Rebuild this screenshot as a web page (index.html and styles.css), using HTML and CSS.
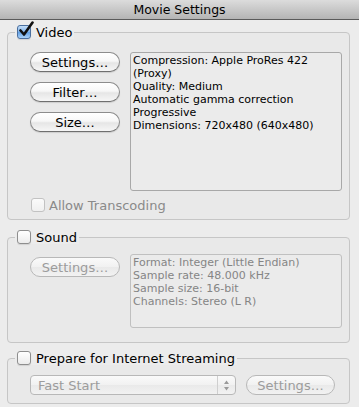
FILE: index.html
```html
<!DOCTYPE html>
<html lang="en">
    <head>
        <meta charset="UTF-8">
        <meta name="viewport" content="width=device-width, initial-scale=1.0">
        <title>Movie Settings</title>
        <link rel="stylesheet" href="styles.css">
    </head>
    <body>
        <header class="titlebar">Movie Settings</header>

        <main class="sheet">
            <fieldset class="group video">
                <legend>
                    <span class="check checked">
                        <svg viewBox="0 0 18 18" width="18" height="18">
                            <path d="M3.5 9.5 L7 13.5 L15.5 1.5" fill="none" stroke="#111" stroke-width="2.6" stroke-linecap="round" stroke-linejoin="round"/>
                        </svg>
                    </span>
                    Video
                </legend>
                <div class="group-body">
                    <div class="row">
                        <div class="buttons">
                            <button class="btn">Settings…</button>
                            <button class="btn">Filter…</button>
                            <button class="btn">Size…</button>
                        </div>
                        <div class="info video-info">
                            Compression: Apple ProRes 422 (Proxy)<br>
                            Quality: Medium<br>
                            Automatic gamma correction<br>
                            Progressive<br>
                            Dimensions: 720x480 (640x480)
                        </div>
                    </div>
                    <label class="option disabled"><span class="check"></span>Allow Transcoding</label>
                </div>
            </fieldset>

            <fieldset class="group sound">
                <legend><span class="check"></span>Sound</legend>
                <div class="group-body">
                    <div class="row">
                        <div class="buttons">
                            <button class="btn disabled">Settings…</button>
                        </div>
                        <div class="info sound-info disabled">
                            Format: Integer (Little Endian)<br>
                            Sample rate: 48.000 kHz<br>
                            Sample size: 16-bit<br>
                            Channels: Stereo (L R)
                        </div>
                    </div>
                </div>
            </fieldset>

            <fieldset class="group streaming">
                <legend><span class="check"></span>Prepare for Internet Streaming</legend>
                <div class="group-body">
                    <div class="stream-row">
                        <div class="popup disabled">
                            <span>Fast Start</span>
                            <span class="arrows">
                                <svg viewBox="0 0 7 11" width="7" height="11">
                                    <path d="M3.5 0.5 L6 4 L1 4 Z M3.5 10.5 L6 7 L1 7 Z" fill="#9a9a9a"/>
                                </svg>
                            </span>
                        </div>
                        <button class="btn disabled">Settings…</button>
                    </div>
                </div>
            </fieldset>
        </main>
    </body>
</html>
```

FILE: styles.css
```css
body {
    margin: 0;
    background-color: #ececec;
    font-family: "DejaVu Sans", "Noto Sans", sans-serif;
    color: #000;
    overflow: hidden;
}

.titlebar {
    height: 19px;
    line-height: 19px;
    text-align: center;
    font-size: 12.5px;
    background: linear-gradient(#dcdcdc, #b4b4b4);
    border-bottom: 1px solid #5a5a5a;
}

.sheet {
    padding: 5px 9px 0 7px;
}

.group {
    margin: 0;
    padding: 0;
    min-width: 0;
    border: 1px solid #c6c6c6;
    border-radius: 4px;
    background-color: #e9e9e9;
}

.group legend {
    display: flex;
    align-items: center;
    height: 14px;
    margin-left: 7px;
    padding: 0 2px;
    font-size: 13px;
    background-color: #ececec;
}

.group legend .check {
    margin-right: 5px;
}

.group-body {
    padding: 13px 7px 7px 22px;
}

.sound {
    margin-top: 10px;
}

.sound .group-body {
    padding: 10px 7px 14px 22px;
}

.streaming {
    margin-top: 8px;
}

.streaming .group-body {
    padding: 10px 7px 8px 22px;
}

.row {
    display: grid;
    grid-template-columns: 90px 1fr;
    column-gap: 10px;
}

.buttons {
    display: flex;
    flex-direction: column;
    gap: 10px;
}

.sound .buttons {
    padding-top: 3px;
}

.btn {
    height: 20px;
    padding: 0;
    border: 1px solid #8c8c8c;
    border-bottom-color: #6f6f6f;
    border-radius: 10px;
    background: linear-gradient(#ffffff, #f7f7f7 45%, #e6e6e6 55%, #f6f6f6);
    box-shadow: 0 1px 1px rgba(0, 0, 0, 0.12);
    font-family: inherit;
    font-size: 13px;
    color: #000;
}

.btn.disabled {
    border-color: #b8b8b8;
    background: linear-gradient(#fafafa, #f1f1f1 50%, #e9e9e9 50%, #f2f2f2);
    box-shadow: none;
    color: #9c9c9c;
}

.info {
    border: 1px solid #a8a8a8;
    border-radius: 3px;
    padding: 1px 2px;
    font-size: 11px;
    line-height: 13px;
    background-color: #ebebeb;
}

.video-info {
    height: 135px;
}

.sound-info {
    height: 70px;
    border-color: #c0c0c0;
    color: #858585;
}

.option {
    display: flex;
    align-items: center;
    margin-top: 7px;
    margin-left: 1px;
    height: 14px;
    font-size: 13px;
}

.option .check {
    margin-right: 4px;
}

.option.disabled {
    color: #8a8a8a;
}

.check {
    position: relative;
    display: inline-block;
    box-sizing: border-box;
    width: 14px;
    height: 14px;
    border: 1px solid #8e8e8e;
    border-radius: 3px;
    background: linear-gradient(#ffffff, #ececec);
    box-shadow: 0 1px 1px rgba(0, 0, 0, 0.1);
}

.option.disabled .check {
    border-color: #c2c2c2;
    background: linear-gradient(#fbfbfb, #f0f0f0);
    box-shadow: none;
}

.check.checked {
    border-color: #4a6f9f;
    background: linear-gradient(#c4def8, #7fb2ea 50%, #5f9ee4 51%, #a9d1f7);
}

.check.checked svg {
    position: absolute;
    left: -1px;
    top: -5px;
}

.stream-row {
    display: flex;
    gap: 10px;
}

.popup {
    display: flex;
    align-items: center;
    justify-content: space-between;
    box-sizing: border-box;
    width: 206px;
    height: 20px;
    padding-left: 7px;
    border: 1px solid #b8b8b8;
    border-radius: 4px;
    background: linear-gradient(#fafafa, #f1f1f1 50%, #e9e9e9 50%, #f2f2f2);
    font-size: 13px;
    color: #9c9c9c;
}

.popup .arrows {
    display: flex;
    align-items: center;
    justify-content: center;
    width: 17px;
    height: 18px;
    border-left: 1px solid #cfcfcf;
}

.stream-row .btn {
    width: 89px;
}
```
